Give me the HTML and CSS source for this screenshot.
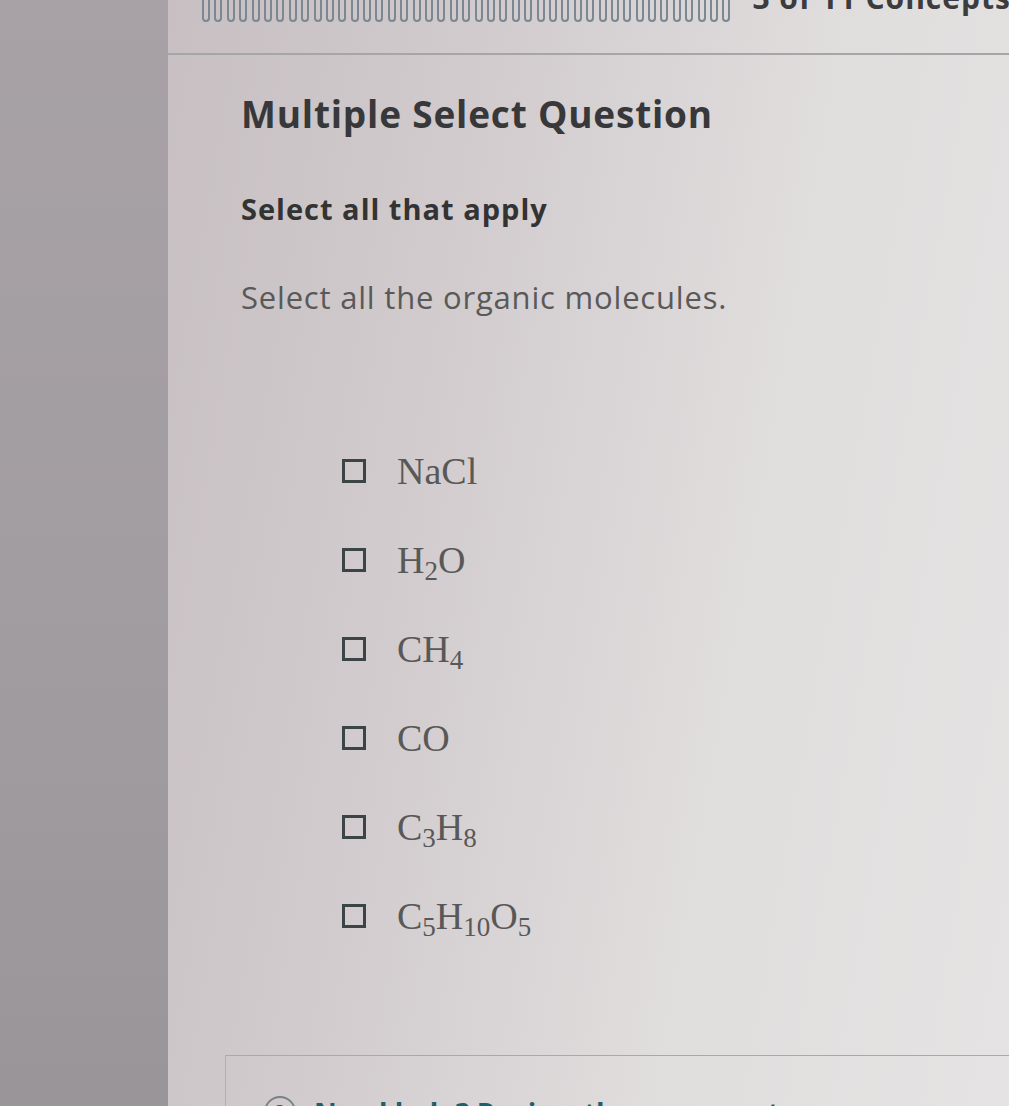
FILE: index.html
```html
<!DOCTYPE html>
<html>
<head>
    <title>Multiple Select Question</title>
    <link rel="stylesheet" href="styles.css">
</head>
<body>
    <div class="rail"></div>

    <div class="main">
        <div class="topbar">
            <div class="segments">
                <span></span><span></span><span></span><span></span><span></span><span></span><span></span><span></span><span></span><span></span>
                <span></span><span></span><span></span><span></span><span></span><span></span><span></span><span></span><span></span><span></span>
                <span></span><span></span><span></span><span></span><span></span><span></span><span></span><span></span><span></span><span></span>
                <span></span><span></span><span></span><span></span><span></span><span></span><span></span><span></span><span></span><span></span>
                <span></span><span></span><span></span>
            </div>
            <div class="progress-title">3 of 11 Concepts completed</div>
        </div>
        <div class="divider"></div>

        <div class="question">
            <h1>Multiple Select Question</h1>
            <h2>Select all that apply</h2>
            <p class="prompt">Select all the organic molecules.</p>

            <ul class="options">
                <li><span class="box"></span><span class="formula">NaCl</span></li>
                <li><span class="box"></span><span class="formula">H<sub>2</sub>O</span></li>
                <li><span class="box"></span><span class="formula">CH<sub>4</sub></span></li>
                <li><span class="box"></span><span class="formula">CO</span></li>
                <li><span class="box"></span><span class="formula">C<sub>3</sub>H<sub>8</sub></span></li>
                <li><span class="box"></span><span class="formula">C<sub>5</sub>H<sub>10</sub>O<sub>5</sub></span></li>
            </ul>
        </div>

        <div class="help-card">
            <span class="help-icon">?</span>
            <span class="help-text">Need help? Review these concept resources.</span>
        </div>
    </div>
</body>
</html>
```

FILE: styles.css
```css
body {
    margin: 0;
    height: 1106px;
    overflow: hidden;
    display: flex;
    font-family: "Open Sans", "Liberation Sans", sans-serif;
    background-color: #d8d3d4;
}
.rail {
    width: 168px;
    flex-shrink: 0;
    background: linear-gradient(180deg, #a8a2a6, #a19ca0 60%, #9a9599);
    box-shadow: 2px 0 3px rgba(0, 0, 0, 0.06);
}
.main {
    flex: 1;
    min-width: 0;
    display: flex;
    flex-direction: column;
    overflow: hidden;
    background: linear-gradient(100deg, #c7bfc2 0%, #d3cdcf 35%, #e0dddd 65%, #e5e3e3 100%);
}
.main > * {
    flex-shrink: 0;
}
.topbar {
    height: 22px;
    display: flex;
    padding-left: 34px;
    overflow: hidden;
}
.segments {
    display: flex;
    gap: 4.4px;
    align-items: flex-end;
    flex-shrink: 0;
}
.segments span {
    box-sizing: border-box;
    width: 8px;
    height: 30px;
    border: 2px solid #7c8891;
    border-top: none;
    border-radius: 0 0 5px 5px;
}
.progress-title {
    margin-left: 22px;
    margin-top: -17px;
    font-size: 30px;
    line-height: 30px;
    font-weight: bold;
    color: #3c3c3f;
    letter-spacing: 1px;
    white-space: nowrap;
}
.divider {
    margin-top: 31px;
    border-top: 2px solid #a5a5aa;
}
.question {
    padding-left: 73px;
}
h1 {
    margin: 38px 0 0;
    font-size: 37px;
    font-weight: bold;
    color: #38383a;
    line-height: 42px;
    letter-spacing: 0.8px;
}
h2 {
    margin: 58px 0 0;
    font-size: 29px;
    font-weight: bold;
    color: #333;
    line-height: 32px;
    letter-spacing: 1px;
}
.prompt {
    margin: 54px 0 0;
    font-size: 31px;
    color: #595959;
    line-height: 36px;
    letter-spacing: 0.8px;
}
.options {
    list-style: none;
    margin: 135px 0 0 101px;
    padding: 0;
    display: flex;
    flex-direction: column;
    gap: 47px;
}
.options li {
    display: flex;
    align-items: center;
    gap: 31px;
    height: 42px;
}
.box {
    width: 18px;
    height: 18px;
    border: 3px solid #3b4545;
    flex-shrink: 0;
}
.formula {
    font-family: "Liberation Serif", serif;
    font-size: 38px;
    color: #585858;
    line-height: 42px;
}
.formula sub {
    font-size: 27px;
    vertical-align: -7px;
    line-height: 0;
}
.help-card {
    margin: 118px 0 0 57px;
    flex: 1;
    border-top: 1px solid #a9a8ab;
    border-left: 1px solid #b3b0b3;
    padding: 20px 0 0 38px;
    display: flex;
    align-items: flex-start;
    gap: 18px;
}
.help-icon {
    width: 28px;
    height: 28px;
    margin-top: 20px;
    border: 2px solid #7a8185;
    border-radius: 50%;
    font-size: 20px;
    text-align: center;
    line-height: 28px;
    color: #1d5f6b;
    flex-shrink: 0;
}
.help-text {
    margin-top: 18px;
    font-size: 28px;
    font-weight: bold;
    color: #1d5f6b;
    white-space: nowrap;
}
```
